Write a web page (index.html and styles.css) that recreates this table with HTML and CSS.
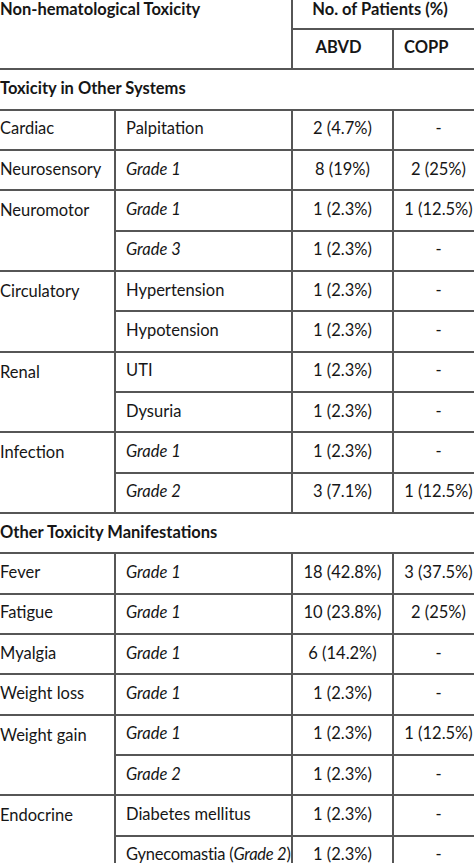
FILE: index.html
```html
<!DOCTYPE html>
<html lang="en">
<head>
  <meta charset="UTF-8">
  <meta name="viewport" content="width=device-width, initial-scale=1.0">
  <title>Non-hematological Toxicity</title>
  <link rel="stylesheet" href="styles.css">
</head>
<body>
  <div class="table-wrap">
    <table class="tox-table">
      <colgroup>
        <col class="col-system">
        <col class="col-event">
        <col class="col-abvd">
        <col class="col-copp">
      </colgroup>
      <thead>
        <tr class="head-top">
          <th rowspan="2" colspan="2" class="head-main">Non-hematological Toxicity</th>
          <th colspan="2" class="head-group">No. of Patients (%)</th>
        </tr>
        <tr class="head-sub">
          <th class="head-abvd">ABVD</th>
          <th class="head-copp">COPP</th>
        </tr>
      </thead>
      <tbody>
        <tr class="section"><td colspan="4">Toxicity in Other Systems</td></tr>
        <tr><td>Cardiac</td><td>Palpitation</td><td class="num">2 (4.7%)</td><td class="num">-</td></tr>
        <tr><td>Neurosensory</td><td><em>Grade 1</em></td><td class="num">8 (19%)</td><td class="num">2 (25%)</td></tr>
        <tr><td rowspan="2" class="top">Neuromotor</td><td><em>Grade 1</em></td><td class="num">1 (2.3%)</td><td class="num">1 (12.5%)</td></tr>
        <tr><td><em>Grade 3</em></td><td class="num">1 (2.3%)</td><td class="num">-</td></tr>
        <tr><td rowspan="2" class="top">Circulatory</td><td>Hypertension</td><td class="num">1 (2.3%)</td><td class="num">-</td></tr>
        <tr><td>Hypotension</td><td class="num">1 (2.3%)</td><td class="num">-</td></tr>
        <tr><td rowspan="2" class="top">Renal</td><td>UTI</td><td class="num">1 (2.3%)</td><td class="num">-</td></tr>
        <tr><td>Dysuria</td><td class="num">1 (2.3%)</td><td class="num">-</td></tr>
        <tr><td rowspan="2" class="top">Infection</td><td><em>Grade 1</em></td><td class="num">1 (2.3%)</td><td class="num">-</td></tr>
        <tr><td><em>Grade 2</em></td><td class="num">3 (7.1%)</td><td class="num">1 (12.5%)</td></tr>
        <tr class="section"><td colspan="4">Other Toxicity Manifestations</td></tr>
        <tr><td>Fever</td><td><em>Grade 1</em></td><td class="num">18 (42.8%)</td><td class="num">3 (37.5%)</td></tr>
        <tr><td>Fatigue</td><td><em>Grade 1</em></td><td class="num">10 (23.8%)</td><td class="num">2 (25%)</td></tr>
        <tr><td>Myalgia</td><td><em>Grade 1</em></td><td class="num">6 (14.2%)</td><td class="num">-</td></tr>
        <tr><td>Weight loss</td><td><em>Grade 1</em></td><td class="num">1 (2.3%)</td><td class="num">-</td></tr>
        <tr><td rowspan="2" class="top">Weight gain</td><td><em>Grade 1</em></td><td class="num">1 (2.3%)</td><td class="num">1 (12.5%)</td></tr>
        <tr><td><em>Grade 2</em></td><td class="num">1 (2.3%)</td><td class="num">-</td></tr>
        <tr><td rowspan="2" class="top">Endocrine</td><td>Diabetes mellitus</td><td class="num">1 (2.3%)</td><td class="num">-</td></tr>
        <tr><td class="tight">Gynecomastia (<em>Grade 2</em>)</td><td class="num">1 (2.3%)</td><td class="num">-</td></tr>
      </tbody>
    </table>
  </div>
</body>
</html>
```

FILE: styles.css
```css
html, body {
  margin: 0;
  padding: 0;
  background: #fff;
  overflow: hidden;
}

body {
  font-family: Lato, "Open Sans", sans-serif;
  color: #161616;
}

.table-wrap {
  width: 474px;
  height: 863px;
  overflow: hidden;
}

.tox-table {
  border-collapse: collapse;
  table-layout: fixed;
  width: 494px;
  margin-left: -10px;
  font-size: 16.5px;
}

.col-system { width: 125px; }
.col-event { width: 177px; }
.col-abvd { width: 101px; }
.col-copp { width: 91px; }

.tox-table th,
.tox-table td {
  border: 2px solid #565656;
  height: 40.33px;
  padding: 0 0 3px 10px;
  text-align: left;
  vertical-align: middle;
  white-space: nowrap;
  box-sizing: border-box;
}

.tox-table th {
  font-weight: bold;
}

.tox-table .head-top th {
  border-top: none;
  height: 28.7px;
  vertical-align: top;
  padding-top: 1px;
  line-height: 16px;
}

.tox-table .head-main {
  border-left: none;
}

.tox-table .head-group {
  text-align: center;
  padding-left: 0;
  padding-right: 16px;
}

.tox-table .head-sub th {
  height: 40.6px;
}

.tox-table .head-abvd {
  text-align: center;
  padding-left: 0;
  padding-right: 8px;
}

.tox-table .head-copp {
  padding-left: 10px;
}

.tox-table td:first-child {
  border-left: none;
}

.tox-table td.num {
  text-align: center;
  padding-left: 0;
}

.tox-table td.top {
  vertical-align: top;
  padding-top: 9px;
}

.tox-table td.tight {
  letter-spacing: -0.25px;
}

.tox-table .section td {
  font-weight: bold;
  border-left: none;
  border-right: none;
}

.tox-table em {
  font-style: italic;
}
```
